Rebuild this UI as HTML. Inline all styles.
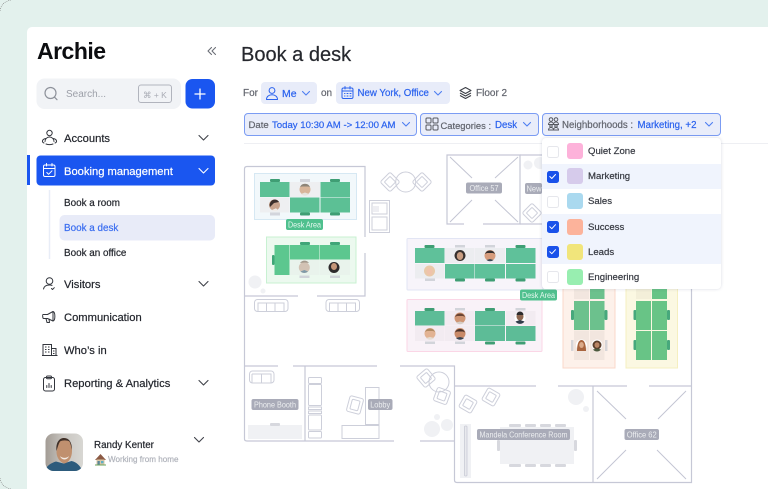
<!DOCTYPE html>
<html lang="en"><head><meta charset="utf-8"><title>Book a desk</title>
<style>
html,body{margin:0;padding:0;width:768px;height:489px;overflow:hidden;background:#e3f1ed;font-family:"Liberation Sans",sans-serif;}
#panel{position:absolute;left:27px;top:27px;width:741px;height:462px;background:#fff;border-radius:5px 0 0 0;}
.t{position:absolute;white-space:nowrap;line-height:14px;height:14px;-webkit-text-stroke:.2px currentColor;}
.m{font-size:11.2px;color:#23262d;left:64px;}
.s{font-size:9.900px;color:#23262d;left:64px;}
.b{color:#2a62ee;}
.g{color:#62656e;}
.chip{position:absolute;background:#e8ecf9;border-radius:4px;}
.chip2{position:absolute;background:#e9edfa;border:1.3px solid #7b9cf3;border-radius:4px;box-sizing:border-box;}
.row{position:absolute;left:542px;width:179px;height:25.2px;}
.hl{background:#f0f4fd;}
.cb{position:absolute;left:5px;top:7px;width:10px;height:10px;border:1px solid #e6e7ec;border-radius:2.5px;background:#fff;}
.cb.on{background:#1a52ea;border-color:#1a52ea;}
.sw{position:absolute;left:25px;top:4.5px;width:16px;height:16px;border-radius:3px;}
.lb{position:absolute;left:46px;top:6.5px;font-size:9.600px;line-height:14px;color:#363941;-webkit-text-stroke:.2px currentColor;}
svg{position:absolute;left:0;top:0;}
</style></head><body>
<div id="panel"></div>
<div class="chip" style="left:260.500px;top:82px;width:56.500px;height:22px;"></div>
<div class="chip" style="left:336px;top:82px;width:114px;height:22px;"></div>

<svg width="768" height="489" viewBox="0 0 768 489" fill="none">
<path d="M0 11Q1 2 11 0M0 478Q1 487 11 489" stroke="#777" stroke-width=".6" stroke-dasharray="1 1"/>
<!-- divider -->
<path d="M244 143.500H768" stroke="#eeeff3"/>
<!-- zones -->
<rect x="254.500" y="173.500" width="102" height="46" fill="#f2f8fb" stroke="#d6e8f3"/>
<rect x="266.500" y="237" width="89.500" height="46" fill="#ecf9ef" stroke="#c8f1d2"/>
<rect x="407" y="238.500" width="136" height="51.500" rx="1" fill="#f7f4fa" stroke="#e2e5f4"/>
<rect x="407" y="299.500" width="135" height="52" rx="1" fill="#f9f2f8" stroke="#fbd6e6"/>
<rect x="563" y="280" width="52" height="88" fill="#fdf1ea" stroke="#fad8ca"/>
<rect x="626" y="280" width="51.500" height="88" fill="#fbf8e2" stroke="#f5efc0"/>
<!-- walls -->
<g stroke="#c6c8d6" stroke-width="1.200">
<path d="M365 237V166.500H247Q244.500 166.500 244.500 169V439Q244.500 441 247 441H394M420 441H454.500"/>
<path d="M365 253V296H317M298 296H244.500"/>
<path d="M244.500 366H278M293 366H377M400 366H454.500V480Q454.500 482.500 457 482.500H691.500V282"/>
<path d="M305 366V441"/>
<path d="M455 386H536M558 386H627M649 386H691.500"/>
<path d="M593 386V482"/>
<path d="M447 167V224H464M483 224H520V155H447V167"/>
<path d="M520 155H542M520 224H542"/>
</g>
<!-- office X -->
<g stroke="#c3c5d3" stroke-width="1">
<path d="M450 157L472 178M518 157L495 178M450 222L472 200M518 222L495 200"/>
<path d="M597 391L626 419M686 391L658 419M597 479L626 450M686 479L657 450"/>
</g>
<!-- furniture outlines -->
<g stroke="#cdcfda" stroke-width="1">
<circle cx="405.700" cy="182" r="10"/>
<g transform="rotate(45 390 182)"><rect x="383" y="175" width="14" height="14" rx="2"/><rect x="386" y="178" width="8" height="8" rx="1"/></g>
<g transform="rotate(45 422 182)"><rect x="415" y="175" width="14" height="14" rx="2"/><rect x="418" y="178" width="8" height="8" rx="1"/></g>
<rect x="369.500" y="200.500" width="20" height="32"/>
<rect x="372" y="203" width="15" height="11"/><rect x="372" y="217" width="15" height="13"/>
<path d="M374 206V212M376 206V212M378 206V212" stroke="#dcdde4"/>
<g transform="rotate(45 532 213)"><rect x="525" y="206" width="14" height="14" rx="2"/><rect x="528" y="209" width="8" height="8" rx="1"/></g>
<rect x="254.500" y="299.500" width="33.500" height="12" rx="3"/><rect x="258" y="303" width="26" height="8.500"/><path d="M266.500 303V311.500M275 303V311.500"/>
<rect x="326" y="299.500" width="33.500" height="12" rx="3"/><rect x="329.500" y="303" width="26" height="8.500"/><path d="M338 303V311.500M346.500 303V311.500"/>
<rect x="249.500" y="371" width="24.500" height="12" rx="3"/><path d="M252 374H271V383M252 374V383M261.500 374V383"/>
<rect x="308.500" y="377.500" width="13" height="6" rx="1"/><rect x="308.500" y="384.500" width="13" height="21" rx="1"/><rect x="308.500" y="407" width="13" height="2.500"/><rect x="308.500" y="411" width="13" height="2.500"/><rect x="308.500" y="415" width="13" height="15" rx="1"/><rect x="308.500" y="431.500" width="13" height="6.500" rx="1"/>
<rect x="365.500" y="387.500" width="13.500" height="37"/>
<rect x="342" y="425.500" width="37" height="13"/>
<g transform="rotate(15 355 405)"><rect x="348" y="397" width="14" height="16" rx="2"/><rect x="351" y="400" width="8" height="10" rx="1"/></g>
<circle cx="439" cy="382" r="10"/>
<g transform="rotate(-40 426 378)"><rect x="419" y="371" width="14" height="14" rx="2"/><rect x="422" y="374" width="8" height="8" rx="1"/></g>
<g transform="rotate(20 442 396)"><rect x="435" y="389" width="14" height="14" rx="2"/><rect x="438" y="392" width="8" height="8" rx="1"/></g>
<g transform="rotate(30 468 404)"><rect x="461" y="397" width="14" height="14" rx="2"/><rect x="464" y="400" width="8" height="8" rx="1"/></g>
<g transform="rotate(-60 491 397)"><rect x="484" y="390" width="14" height="14" rx="2"/><rect x="487" y="393" width="8" height="8" rx="1"/></g>
</g>
<!-- grey blobs -->
<g fill="#f0f1f4">
<circle cx="528" cy="165" r="4.500"/><circle cx="540" cy="163" r="6"/>
<circle cx="255" cy="282" r="6.500"/><circle cx="263" cy="291" r="2.500"/>
<circle cx="432" cy="429" r="8"/><circle cx="447" cy="425" r="6"/><circle cx="437" cy="417" r="3"/>
<circle cx="576" cy="397" r="8"/><circle cx="586" cy="409" r="3"/>
<rect x="248" y="425" width="54" height="14"/>
<rect x="460" y="424" width="11" height="54"/>
<rect x="500" y="427" width="74" height="37"/>
</g>
<rect x="464.500" y="426" width="2.500" height="50" rx="1" fill="#e8e9ed" stroke="#c8cad5" stroke-width=".8"/>
<g fill="#d7d8de">
<rect x="270" y="423" width="10" height="3" rx="1"/>
<rect x="509" y="424" width="12" height="3" rx="1"/><rect x="525" y="424" width="11" height="3" rx="1"/><rect x="540" y="424" width="11" height="3" rx="1"/><rect x="555" y="424" width="11" height="3" rx="1"/>
<rect x="509" y="464" width="12" height="3" rx="1"/><rect x="525" y="464" width="11" height="3" rx="1"/><rect x="540" y="464" width="11" height="3" rx="1"/><rect x="555" y="464" width="11" height="3" rx="1"/>
<rect x="497" y="440" width="3" height="11" rx="1"/><rect x="574" y="440" width="3" height="11" rx="1"/>
</g>

<!-- cluster 1 -->
<g fill="#eeeff1"><rect x="290" y="182" width="30" height="15"/><rect x="260" y="197.500" width="29.500" height="15"/></g>
<g fill="#d3d5dc"><rect x="300" y="179" width="10" height="3"/><rect x="270" y="212.500" width="10" height="3"/></g>
<g fill="#3f9e74"><rect x="270" y="179" width="10" height="3" rx="1"/><rect x="330" y="179" width="10" height="3" rx="1"/><rect x="300" y="212.500" width="10" height="3" rx="1"/><rect x="330" y="212.500" width="10" height="3" rx="1"/></g>
<g fill="#5cc095"><rect x="260" y="182" width="29.500" height="15"/><rect x="320.500" y="182" width="29.500" height="15"/><rect x="290" y="197.500" width="29.500" height="15"/><rect x="320.500" y="197.500" width="29.500" height="15"/></g>
<circle cx="305" cy="189.500" r="5.500" fill="#d8b59a"/><path d="M300 187a5.500 5.500 0 0 1 10 0l-2 -.5h-6z" fill="#8d8478"/><path d="M301 194a5.500 5.500 0 0 0 8 0l-4-1.500z" fill="#e7e4de"/>
<circle cx="274.500" cy="205" r="5.500" fill="#c9a48e"/><path d="M270 207a5.500 5.500 0 0 1 5-7.500a5 5 0 0 1 4 2.500l-5 1z" fill="#3c2f2c"/><path d="M272 210a5.500 5.500 0 0 0 6 .3l-2-2z" fill="#f1ece8"/>

<!-- cluster 2 -->
<g fill="#e9f3ec"><rect x="290" y="260" width="29.500" height="15"/><rect x="320" y="260" width="30" height="15"/></g>
<g fill="#d0d3d9"><rect x="299.500" y="275.500" width="10" height="2.500"/><rect x="330" y="275.500" width="10" height="2.500"/></g>
<g fill="#3fa678"><rect x="272" y="255" width="2.500" height="10" rx="1"/><rect x="300" y="242" width="10" height="3" rx="1"/><rect x="330" y="242" width="10" height="3" rx="1"/></g>
<g fill="#5cc78f"><rect x="274.500" y="245" width="15" height="30"/><rect x="290" y="245" width="29.500" height="14.500"/><rect x="320" y="245" width="30" height="14.500"/></g>
<circle cx="304.300" cy="267.500" r="5.500" fill="#d2c2b4"/><path d="M300 263a5.500 5.500 0 0 1 9 0l-4-.5z" fill="#a49a8d"/><path d="M300.500 271.500a5.500 5.500 0 0 0 7.500 0l-3.700-1.500z" fill="#7f9aa8"/>
<circle cx="334" cy="267.500" r="5.500" fill="#2e2a2c"/><ellipse cx="334" cy="266.500" rx="3" ry="3.500" fill="#c49679"/>

<!-- cluster 3 -->
<g fill="#ecedf0"><rect x="445" y="248" width="29.500" height="15"/><rect x="475" y="248" width="30" height="15"/><rect x="415" y="264" width="29.500" height="14.500"/></g>
<g fill="#d2d4da"><rect x="455" y="245" width="10" height="2.500"/><rect x="485" y="245" width="10" height="2.500"/><rect x="425" y="278.500" width="10" height="2.500"/></g>
<g fill="#3f9e74"><rect x="424.500" y="245" width="10" height="3" rx="1"/><rect x="515.500" y="245" width="10" height="3" rx="1"/><rect x="455" y="278.500" width="10" height="3" rx="1"/><rect x="485" y="278.500" width="10" height="3" rx="1"/><rect x="515.500" y="278.500" width="10" height="3" rx="1"/></g>
<g fill="#5fc19a"><rect x="415" y="248" width="29.500" height="15"/><rect x="506" y="248" width="29.500" height="15"/><rect x="445" y="264" width="29.500" height="14.500"/><rect x="475" y="264" width="30" height="14.500"/><rect x="506" y="264" width="29.500" height="14.500"/></g>
<circle cx="460" cy="255.500" r="5.500" fill="#37302e"/><ellipse cx="460" cy="256" rx="3.200" ry="4" fill="#c99d82"/>
<circle cx="490" cy="255.500" r="5.500" fill="#d79c7c"/><path d="M485 254a5.300 5.300 0 0 1 10 0l-2-1h-6z" fill="#33302f"/><path d="M486.500 260a5.500 5.500 0 0 0 7 0l-3.500-1z" fill="#3d4a57"/>
<circle cx="429.500" cy="271" r="5.500" fill="#e9c9a8"/><ellipse cx="429.500" cy="271.500" rx="3" ry="3.500" fill="#efc3ab"/>

<!-- cluster 4 -->
<g fill="#f2ebf1"><rect x="445" y="311" width="29.500" height="14.500"/><rect x="506" y="311" width="29.500" height="14.500"/><rect x="415" y="326" width="29.500" height="15"/><rect x="445" y="326" width="29.500" height="15"/></g>
<g fill="#d2d4da"><rect x="455" y="308" width="10" height="2.500"/><rect x="515.500" y="308" width="10" height="2.500"/><rect x="425" y="341.500" width="10" height="2.500"/><rect x="455" y="341.500" width="10" height="2.500"/></g>
<g fill="#3f9e74"><rect x="424.500" y="308" width="10" height="3" rx="1"/><rect x="485" y="308" width="10" height="3" rx="1"/><rect x="485" y="341.500" width="10" height="3" rx="1"/><rect x="515.500" y="341.500" width="10" height="3" rx="1"/></g>
<g fill="#5dbc97"><rect x="415" y="311" width="29.500" height="14.500"/><rect x="475" y="311" width="30" height="14.500"/><rect x="475" y="326" width="30" height="15"/><rect x="506" y="326" width="29.500" height="15"/></g>
<circle cx="460" cy="318" r="5.500" fill="#cf9574"/><path d="M455 317a5.300 5.300 0 0 1 10 0l-2-1h-6z" fill="#6a4433"/><path d="M456 322.500a5.500 5.500 0 0 0 8 0l-4-1z" fill="#d5cdc6"/>
<circle cx="520" cy="318" r="5.500" fill="#fff"/><ellipse cx="520" cy="316.500" rx="3.500" ry="4" fill="#8d6650"/><path d="M516.500 315a3.500 3.500 0 0 1 7 0z" fill="#2c2a2c"/><path d="M515.500 321.500a5.500 5.500 0 0 0 9 0l-4.500-1.500z" fill="#2f3b4a"/>
<circle cx="430" cy="333.500" r="5.500" fill="#e2b393"/><path d="M425 332a5.300 5.300 0 0 1 10 0l-2-1h-6z" fill="#b08a62"/><path d="M426 338a5.500 5.500 0 0 0 8 0l-4-1z" fill="#e6ddd3"/>
<circle cx="460" cy="333.500" r="5.500" fill="#c98a68"/><path d="M455 332.500a5.300 5.300 0 0 1 10 0l-2-1h-6z" fill="#49322a"/><path d="M456 338a5.500 5.500 0 0 0 8 0l-4-1z" fill="#39424f"/>

<!-- cluster 5 -->
<g fill="#f2e6df"><rect x="574" y="280" width="15" height="19"/><rect x="574" y="330.500" width="15" height="29.500"/><rect x="590" y="330.500" width="14.500" height="29.500"/></g>
<g fill="#d6d5d8"><rect x="571" y="340" width="2.500" height="11"/><rect x="605" y="340" width="2.500" height="11"/></g>
<g fill="#47a87c"><rect x="571" y="310" width="3" height="10" rx="1"/><rect x="604.500" y="310" width="3" height="10" rx="1"/></g>
<g fill="#6cc18d"><rect x="590" y="280" width="14.500" height="19"/><rect x="574" y="301" width="15" height="29"/><rect x="590" y="301" width="14.500" height="29"/></g>
<circle cx="581.500" cy="345" r="5.500" fill="#fff"/><path d="M577 351c0-5 1-11 4.500-11s4.500 6 4.500 11z" fill="#a9653f"/><ellipse cx="581.500" cy="345" rx="2.300" ry="3" fill="#dcab8a"/>
<circle cx="597" cy="345" r="5.500" fill="#fff"/><circle cx="597" cy="345" r="4.500" fill="#5b3f2c"/><ellipse cx="597" cy="345" rx="2.500" ry="2.800" fill="#b98565"/><path d="M593 349.500a5 5 0 0 0 8 0l-4-1z" fill="#4b5a3e"/>

<!-- cluster 6 -->
<g fill="#f3efd9"><rect x="636" y="280" width="15" height="19"/></g>
<g fill="#47a87c"><rect x="633.500" y="310" width="3" height="10" rx="1"/><rect x="667" y="310" width="3" height="10" rx="1"/><rect x="633.500" y="340" width="3" height="10" rx="1"/><rect x="667" y="340" width="3" height="10" rx="1"/></g>
<g fill="#68c486"><rect x="652" y="280" width="15" height="19"/><rect x="636" y="301" width="15" height="29"/><rect x="652" y="301" width="15" height="29"/><rect x="636" y="331" width="15" height="29"/><rect x="652" y="331" width="15" height="29"/></g>

<!-- labels -->
<g fill="#a9abb8">
<rect x="466" y="182.500" width="36" height="11" rx="2"/>
<rect x="525" y="183" width="17" height="11" rx="2"/>
<rect x="251.500" y="399" width="47" height="11" rx="2"/>
<rect x="368" y="399" width="24.500" height="11" rx="2"/>
<rect x="477" y="429" width="93" height="11" rx="2"/>
<rect x="624.500" y="429" width="34.500" height="11" rx="2"/>
</g>
<g fill="#4fc08e"><rect x="286" y="219" width="37" height="11" rx="2"/><rect x="520" y="289.500" width="37" height="11" rx="2"/></g>
<g font-family="Liberation Sans, sans-serif" font-size="8.400" fill="#eceef0" text-anchor="middle" lengthAdjust="spacingAndGlyphs">
<text x="484" y="191" textLength="29" lengthAdjust="spacingAndGlyphs">Office 57</text>
<text x="534" y="191.500" textLength="15" lengthAdjust="spacingAndGlyphs">New</text>
<text x="275" y="407.500" textLength="42" lengthAdjust="spacingAndGlyphs">Phone Booth</text>
<text x="380.200" y="407.500" textLength="20" lengthAdjust="spacingAndGlyphs">Lobby</text>
<text x="523.500" y="437.500" textLength="88" lengthAdjust="spacingAndGlyphs">Mandela Conference Room</text>
<text x="641.700" y="437.500" textLength="30" lengthAdjust="spacingAndGlyphs">Office 62</text>
<text x="304.500" y="227.500" fill="#e4f7ee" textLength="33" lengthAdjust="spacingAndGlyphs">Desk Area</text>
<text x="538.500" y="298" fill="#e4f7ee" textLength="33" lengthAdjust="spacingAndGlyphs">Desk Area</text>
</g>

<!-- sidebar graphics -->
<rect x="36.500" y="78.500" width="144.500" height="30.500" rx="8" fill="#f1f3f6"/>
<circle cx="50.500" cy="93" r="5.500" stroke="#8e929b" stroke-width="1.200"/><path d="M54.500 97.200L57 99.700" stroke="#8e929b" stroke-width="1.200" stroke-linecap="round"/>
<rect x="138.500" y="85" width="33" height="17.500" rx="2.500" stroke="#b1b4bd" stroke-width="1"/>
<rect x="185.500" y="79" width="29.500" height="29.500" rx="7" fill="#1a56f0"/>
<path d="M200 89V99M195 94H205" stroke="#fff" stroke-width="1.300" stroke-linecap="round"/>
<path d="M211.500 47.500L208 51L211.500 54.500M215.500 47.500L212 51L215.500 54.500" stroke="#6b6e76" stroke-width="1.100" stroke-linecap="round" stroke-linejoin="round"/>

<rect x="27" y="155" width="3" height="30" fill="#1a56f0"/>
<rect x="36.500" y="155.500" width="178.500" height="30" rx="4" fill="#1a56f0"/>
<path d="M49.500 190V259" stroke="#e8edf7" stroke-width="1.500"/>
<rect x="59.500" y="215" width="155.500" height="25.500" rx="5" fill="#e8ebf8"/>

<!-- accounts icon -->
<g stroke="#33363d" stroke-width="1" stroke-linecap="round" stroke-linejoin="round">
<circle cx="49.500" cy="133" r="2.700"/>
<path d="M45 141.500a4.500 4.500 0 0 1 9 0"/>
<path d="M45.500 138.500C42 139.500 41.500 142 44 143M53.500 138.500C57 139.500 57.500 142 55 143M46 144C48 144.700 51 144.700 53 144"/>
</g>
<!-- calendar in blue -->
<g stroke="#fff" stroke-width="1" stroke-linecap="round" stroke-linejoin="round">
<rect x="43.500" y="165" width="11.500" height="11.500" rx="1.500"/>
<path d="M43.500 168.500H55M46.500 163.500V166M52 163.500V166"/>
<path d="M46.800 172.500L48.600 174.300L52 170.800"/>
</g>
<!-- visitors -->
<g stroke="#33363d" stroke-width="1" stroke-linecap="round" stroke-linejoin="round">
<circle cx="49.500" cy="281" r="3.300"/>
<path d="M43.500 289c.5-2.500 2.500-4 6-4 1 0 2 .2 2.500.4M51.500 288.500l1 1 1.800-1.800"/>
</g>
<!-- communication -->
<g stroke="#33363d" stroke-width="1" stroke-linecap="round" stroke-linejoin="round">
<path d="M43 314.500H47.500L53 311.500V321L47.500 318.500H43.500C42.500 318.500 42.500 314.500 43 314.500Z"/>
<path d="M46 318.500L47 322.500H49.500L49 319"/>
<path d="M53 311.500C55.500 312 55.500 320.500 53 321"/>
</g>
<!-- who's in -->
<g stroke="#33363d" stroke-width="1">
<path d="M43 355.500V344.500H51.500V355.500M51.500 348.500H56V355.500M42 355.500H57.500"/>
<path d="M45 347H46.500M48 347H49.500M45 349.500H46.500M48 349.500H49.500M45 352H46.500M48 352H49.500M53 351H54.500M53 353.500H54.500"/>
</g>
<!-- reporting -->
<g stroke="#33363d" stroke-width="1" stroke-linecap="round" stroke-linejoin="round">
<rect x="43.500" y="377.500" width="11" height="13.500" rx="2"/>
<rect x="46.500" y="376" width="5" height="2.800" rx="1"/>
<path d="M46.800 387.500V385.500M49 387.500V383.500M51.200 387.500V385.500"/>
</g>
<!-- chevrons -->
<g stroke="#40434a" stroke-width="1.100" stroke-linecap="round" stroke-linejoin="round">
<path d="M199 135.500L203.500 140L208 135.500"/>
<path d="M199 281.500L203.500 286L208 281.500"/>
<path d="M199 380.500L203.500 385L208 380.500"/>
<path d="M194.500 437.500L199 442L203.500 437.500"/>
</g>
<path d="M199 168.500L203.500 173L208 168.500" stroke="#fff" stroke-width="1.100" stroke-linecap="round" stroke-linejoin="round"/>

<!-- avatar -->
<defs><clipPath id="av"><rect x="45.500" y="433.500" width="37.500" height="37.500" rx="8"/></clipPath>
<linearGradient id="avg" x1="0" y1="0" x2="1" y2="0"><stop offset="0" stop-color="#a39c95"/><stop offset=".5" stop-color="#c9c6c1"/><stop offset="1" stop-color="#d8d7d3"/></linearGradient></defs>
<g clip-path="url(#av)">
<rect x="45.500" y="433.500" width="37.500" height="37.500" fill="url(#avg)"/>
<path d="M45 471c1-5 6-8 11-9.500l7.500 2l8-2.500c5 1 9 5 11 10z" fill="#2d5b7c"/>
<path d="M56.500 452c0-9 3-14 7.500-14s8 5 8 13c0 6-3 11.500-7.500 12.500c-4.500-1-8-6-8-11.500z" fill="#c0906f"/>
<path d="M56.500 451c-1-8 2.500-13 7.500-13s8 4 8 12c-.7-3-1.300-6-2.500-8.500c-2.500-1.500-7-1.500-9.500 0c-1.500 2.500-2.500 6-3.500 9.500z" fill="#3f3029"/>
<path d="M60 456c2 2.500 7 2.500 9 0c-.5 2-2.500 3.500-4.500 3.500s-4-1.500-4.500-3.500z" fill="#f4ece6"/>
</g>
<!-- house -->
<g>
<path d="M95 460L100.500 454L106 460Z" fill="#8c5a44"/>
<rect x="96.500" y="459.500" width="8" height="5.500" fill="#d9c6a5"/>
<rect x="97.500" y="461" width="2.300" height="4" fill="#59879a"/>
<rect x="101" y="461" width="2.500" height="2.300" fill="#5bb0c7"/>
<path d="M95 465H106" stroke="#6aa35c"/>
</g>

<!-- top bar icons -->
<g stroke="#2a62ee" stroke-width="1" stroke-linecap="round" stroke-linejoin="round">
<circle cx="272" cy="90.500" r="2.900"/>
<path d="M266.500 99.500c0-3 2.500-4.800 5.500-4.800s5.500 1.800 5.500 4.800H266.500z"/>
<rect x="342" y="88" width="11" height="10.500" rx="1.500"/>
<path d="M342 91H353M345 86.500V89M350 86.500V89"/>
<path d="M344.500 93.500H345M347 93.500H348M350 93.500H351M344.500 96H345M347 96H348M350 96H351"/>
</g>
<g stroke="#4e7ff1" stroke-width="1.100" stroke-linecap="round" stroke-linejoin="round">
<path d="M302.500 91.500L306 95L309.500 91.500"/>
<path d="M434.500 91.500L438 95L441.500 91.500"/>
</g>
<g stroke="#3b3e45" stroke-width="1" stroke-linejoin="round">
<path d="M460 90.500L465.500 87.500L471 90.500L465.500 93.500Z"/>
<path d="M460 93L465.500 96L471 93M460 95.500L465.500 98.500L471 95.500"/>
</g>
</svg>

<!-- sidebar text -->
<div class="t" style="left:37px;top:38px;height:26px;line-height:26px;font-size:23px;font-weight:bold;color:#0c0d10;letter-spacing:-.5px;-webkit-text-stroke:0;">Archie</div>
<div class="t" style="left:66px;top:88px;font-size:10px;color:#9c9fa8;-webkit-text-stroke:0;">Search...</div>
<div class="t" style="left:143px;top:87.500px;font-size:8.500px;color:#a9acb5;-webkit-text-stroke:0;">⌘ + K</div>
<div class="t m" style="top:132px;">Accounts</div>
<div class="t m" style="top:165px;color:#fff;">Booking management</div>
<div class="t s" style="top:197px;">Book a room</div>
<div class="t s" style="top:222px;color:#3a6df0;">Book a desk</div>
<div class="t s" style="top:247px;">Book an office</div>
<div class="t m" style="top:278px;">Visitors</div>
<div class="t m" style="top:311px;">Communication</div>
<div class="t m" style="top:344px;">Who’s in</div>
<div class="t m" style="top:377px;">Reporting &amp; Analytics</div>
<div class="t" style="left:94px;top:439px;font-size:9.800px;color:#23262d;">Randy Kenter</div>
<div class="t" style="left:108px;top:453px;font-size:8.100px;color:#b0b3bb;">Working from home</div>

<!-- header -->
<div class="t" style="left:241px;top:42px;height:26px;line-height:26px;font-size:20px;color:#26282e;">Book a desk</div>
<div class="t g" style="left:243px;top:87px;font-size:10px;">For</div>
<div class="t b" style="left:282px;top:87px;font-size:10.500px;">Me</div>
<div class="t g" style="left:321px;top:87px;font-size:10px;">on</div>
<div class="t b" style="left:357.500px;top:87px;font-size:9.700px;">New York, Office</div>
<div class="t g" style="left:476px;top:87px;font-size:10px;">Floor 2</div>

<!-- filters -->
<div class="chip2" style="left:244px;top:113px;width:173px;height:23px;"></div>
<div class="t g" style="left:248.500px;top:118.500px;font-size:9.600px;">Date</div>
<div class="t b" style="left:272px;top:118.500px;font-size:9.600px;">Today 10:30 AM -&gt; 12:00 AM</div>
<div class="chip2" style="left:420px;top:113px;width:119px;height:23px;"></div>
<div class="t g" style="left:440.500px;top:118.500px;font-size:9.400px;">Categories :</div>
<div class="t b" style="left:495px;top:118.500px;font-size:9.700px;">Desk</div>
<div class="chip2" style="left:542px;top:113px;width:179px;height:23px;"></div>
<div class="t g" style="left:562px;top:118.500px;font-size:9.700px;">Neighborhoods :</div>
<div class="t b" style="left:637.500px;top:118.500px;font-size:9.700px;">Marketing, +2</div>
<svg width="768" height="489" viewBox="0 0 768 489" fill="none" style="pointer-events:none">
<g stroke="#4e7ff1" stroke-width="1.100" stroke-linecap="round" stroke-linejoin="round">
<path d="M402.500 122.500L406 126L409.500 122.500"/>
<path d="M523.500 122.500L527 126L530.500 122.500"/>
<path d="M705.500 122.500L709 126L712.500 122.500"/>
</g>
<g stroke="#55585f" stroke-width="1">
<rect x="426" y="118" width="5" height="5" rx="1"/><rect x="433" y="118" width="5" height="5" rx="1"/><rect x="426" y="125" width="5" height="5" rx="1"/><rect x="433" y="125" width="5" height="5" rx="1"/>
<circle cx="551" cy="119.500" r="1.800"/><circle cx="556" cy="119.500" r="1.800"/>
<path d="M548.500 124.500a2.500 2.500 0 0 1 5 0zM553.500 124.500a2.500 2.500 0 0 1 5 0z"/>
<circle cx="551" cy="126" r="1.200"/><circle cx="556" cy="126" r="1.200"/>
<path d="M548.500 130a2.500 2.500 0 0 1 5 0zM553.500 130a2.500 2.500 0 0 1 5 0z"/>
</g>
</svg>

<!-- dropdown -->
<div style="position:absolute;left:542px;top:138px;width:179px;height:151px;background:#fff;border-radius:4px;box-shadow:0 0 3px rgba(60,70,110,.2);"></div>
<div class="row" style="top:138.500px;"><span class="cb"></span><span class="sw" style="background:#fdb2da;"></span><span class="lb">Quiet Zone</span></div>
<div class="row hl" style="top:163.500px;"><span class="cb on"></span><span class="sw" style="background:#d6cbeb;"></span><span class="lb">Marketing</span></div>
<div class="row" style="top:188.800px;"><span class="cb"></span><span class="sw" style="background:#aad9ef;"></span><span class="lb">Sales</span></div>
<div class="row hl" style="top:214px;"><span class="cb on"></span><span class="sw" style="background:#fcb39b;"></span><span class="lb">Success</span></div>
<div class="row hl" style="top:239px;"><span class="cb on"></span><span class="sw" style="background:#f1e57b;"></span><span class="lb">Leads</span></div>
<div class="row" style="top:264px;"><span class="cb"></span><span class="sw" style="background:#98eeb0;"></span><span class="lb">Engineering</span></div>
<svg width="768" height="489" viewBox="0 0 768 489" fill="none" style="pointer-events:none">
<g stroke="#fff" stroke-width="1" stroke-linecap="round" stroke-linejoin="round">
<path d="M549.800 176.500L551.800 178.500L555.500 174.500"/>
<path d="M549.800 226.700L551.800 228.700L555.500 224.700"/>
<path d="M549.800 251.700L551.800 253.700L555.500 249.700"/>
</g>
</svg>
</body></html>
